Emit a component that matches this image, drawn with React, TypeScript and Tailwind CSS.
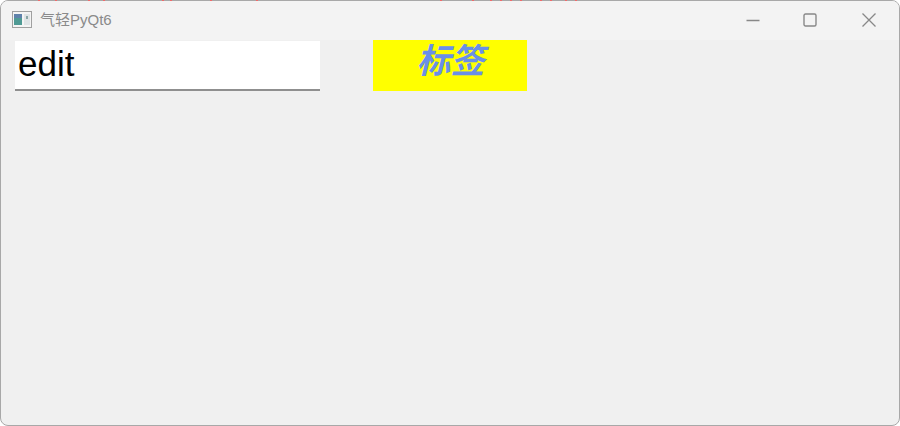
const specks = [38, 55, 88, 103, 162, 170, 210, 256, 440, 472, 490, 500, 510, 520, 540, 550, 565, 575];

export default function App() {
  return (
    <div className="relative h-[426px] w-[900px] overflow-hidden bg-white">
      <div className="flex h-full w-full flex-col overflow-hidden rounded-[8px] border border-[#a8a8a8] bg-[#f0f0f0] font-['Liberation_Sans','Noto_Sans_CJK_SC',sans-serif]">
        <div className="flex h-[39px] shrink-0 items-center bg-[#f3f3f3] pb-[2px] pl-[11px]">
          <svg width="20" height="17" viewBox="0 0 20 17" className="shrink-0">
            <rect x="0.5" y="0.5" width="19" height="16" fill="#f4f4f4" stroke="#a0a0a0" />
            <rect x="2" y="3" width="8" height="11" fill="#4f9a94" />
            <rect x="2" y="3" width="8" height="4" fill="#5f82ab" />
            <rect x="12" y="3" width="6" height="11" fill="#dfe4e6" />
            <rect x="14" y="5" width="2" height="3" fill="#8aa5a6" />
          </svg>
          <span className="ml-[8px] text-[15px] leading-none text-[#8a8a8a]">气轻PyQt6</span>
          <div className="ml-auto flex items-center text-[#888888]">
            <svg width="14" height="14" viewBox="0 0 14 14" fill="none" stroke="currentColor" strokeWidth="1.4" className="mr-[43px]">
              <path d="M0.5 7.5H13.5" />
            </svg>
            <svg width="14" height="14" viewBox="0 0 14 14" fill="none" stroke="currentColor" strokeWidth="1.4" className="mr-[44px]">
              <rect x="1" y="1" width="12" height="12" rx="1.5" />
            </svg>
            <svg width="16" height="16" viewBox="0 0 16 16" fill="none" stroke="currentColor" strokeWidth="1.3" className="mr-[22px]">
              <path d="M1.5 1.5L14.5 14.5M14.5 1.5L1.5 14.5" />
            </svg>
          </div>
        </div>
        <div className="flex flex-1 items-start pl-[14px]">
          <div className="mt-[1px] flex h-[50px] w-[305px] items-center border-b-2 border-[#8f8f8f] bg-white pb-[4px] pl-[3px] text-[35px] leading-none text-black">
            edit
          </div>
          <div className="ml-[53px] flex h-[51px] w-[154px] items-center justify-center bg-[#ffff00] pb-[9px] pl-[1px] text-[34px] font-bold italic leading-none text-[#6a8fe8]">
            标签
          </div>
        </div>
      </div>
      {specks.map((x) => (
        <span key={x} className="absolute top-0 h-[1px] w-[2px] bg-[#f06a6a]" style={{ left: x }} />
      ))}
    </div>
  );
}
